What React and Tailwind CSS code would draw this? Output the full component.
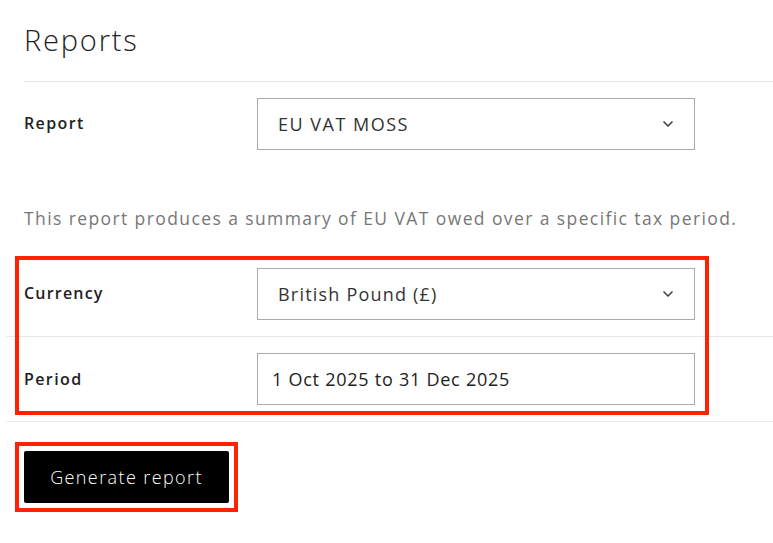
import { ChevronDown } from "lucide-react";

export default function App() {
  return (
    <div className="min-h-screen bg-white font-['Open_Sans',sans-serif] text-[#333]">
      {/* Title */}
      <div className="pl-6 pt-[20px]">
        <h1 className="text-[29px] font-light leading-[40px] tracking-[1.8px] text-[#222]">Reports</h1>
      </div>
      <div className="ml-6 mt-[21px] border-t border-[#e6e6e6]" />

      {/* Report type */}
      <div className="flex items-center py-[16px] pl-6">
        <label className="-mt-[2px] w-[233px] text-[16px] font-semibold tracking-[1.4px] text-[#222]">Report</label>
        <div className="flex h-[52px] w-[438px] items-center justify-between border border-[#aaa] pl-[20px] pr-[18px]">
          <span className="text-[18px] tracking-[1.5px] text-[#333]">EU VAT MOSS</span>
          <ChevronDown size={16} strokeWidth={2.5} className="text-[#444]" />
        </div>
      </div>

      <p className="pl-6 pt-[40px] pb-[22px] text-[17.5px] leading-[24px] tracking-[1.4px] text-[#777]">
        This report produces a summary of EU VAT owed over a specific tax period.
      </p>

      {/* Highlighted options */}
      <div className="relative pl-[6px]">
        <div className="flex items-center border-b border-[#e6e8ea] py-[16px] pl-[18px]">
          <label className="-mt-[2px] w-[233px] text-[16px] font-semibold tracking-[1.2px] text-[#222]">Currency</label>
          <div className="flex h-[52px] w-[438px] items-center justify-between border border-[#aaa] pl-[20px] pr-[18px]">
            <span className="text-[18px] tracking-[1.2px] text-[#333]">British Pound (£)</span>
            <ChevronDown size={16} strokeWidth={2.5} className="text-[#444]" />
          </div>
        </div>
        <div className="flex items-center border-b border-[#e6e8ea] py-[16px] pl-[18px]">
          <label className="w-[233px] text-[16px] font-semibold tracking-[1.4px] text-[#222]">Period</label>
          <div className="flex h-[52px] w-[438px] items-center border border-[#aaa] pl-[14px]">
            <span className="text-[18px] tracking-[0.75px] text-[#222]">1 Oct 2025 to 31 Dec 2025</span>
          </div>
        </div>
        <div className="pointer-events-none absolute left-[15px] top-[4px] h-[159px] w-[694px] border-[4px] border-[#ff2200]" />
      </div>

      {/* Action */}
      <div className="pl-[15px] pt-[20px]">
        <div className="inline-block border-[4px] border-[#ff2200] p-[5px]">
          <button className="h-[52px] w-[205px] rounded-[2px] bg-black text-[18px] font-light tracking-[1.4px] text-white">
            Generate report
          </button>
        </div>
      </div>
    </div>
  );
}
